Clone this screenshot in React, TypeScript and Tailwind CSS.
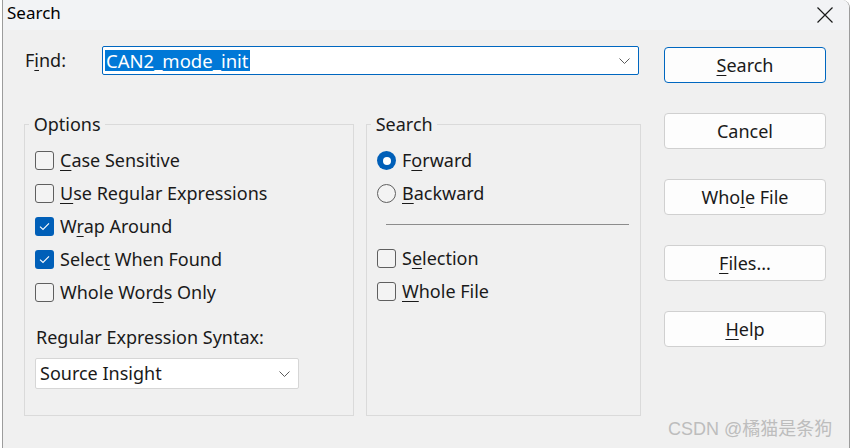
import React from "react";

const font = { fontFamily: '"Noto Sans", "Liberation Sans", sans-serif' };

function U({ children }: { children: React.ReactNode }) {
  return <span className="underline underline-offset-[3px] decoration-1">{children}</span>;
}

function Check({ checked }: { checked?: boolean }) {
  if (checked) {
    return (
      <span className="w-[19px] h-[19px] rounded-[3px] bg-[#005fb8] flex items-center justify-center shrink-0">
        <svg width="11" height="9" viewBox="0 0 11 9" fill="none">
          <path d="M1 4.6 L4 7.4 L10 1.4" stroke="white" strokeWidth="1.1" />
        </svg>
      </span>
    );
  }
  return <span className="w-[19px] h-[19px] rounded-[3px] border border-[#5f5f5f] bg-[#f3f3f3] shrink-0" />;
}

function Radio({ checked }: { checked?: boolean }) {
  if (checked) {
    return (
      <span className="w-[19px] h-[19px] rounded-full bg-[#005fb8] flex items-center justify-center shrink-0">
        <span className="w-[8px] h-[8px] rounded-full bg-white" />
      </span>
    );
  }
  return <span className="w-[19px] h-[19px] rounded-full border border-[#5f5f5f] bg-[#f3f3f3] shrink-0" />;
}

function Row({ box, children }: { box: React.ReactNode; children: React.ReactNode }) {
  return (
    <div className="h-[33px] flex items-center gap-[6px]">
      {box}
      <span>{children}</span>
    </div>
  );
}

function Chevron() {
  return (
    <svg width="11" height="6" viewBox="0 0 11 6" fill="none">
      <path d="M0.5 0.5 L5.5 5.5 L10.5 0.5" stroke="#5a5a5a" strokeWidth="1" />
    </svg>
  );
}

function Btn({ children, primary }: { children: React.ReactNode; primary?: boolean }) {
  return (
    <div
      className={
        "w-[162px] h-[36px] rounded-[4px] bg-[#fdfdfd] flex items-center justify-center " +
        (primary ? "border border-[#0067c0]" : "border border-[#d0d0d0]")
      }
    >
      {children}
    </div>
  );
}

export default function App() {
  return (
    <div className="w-[853px] h-[448px] bg-white flex text-[18px] text-[#1a1a1a] overflow-hidden relative" style={font}>
      <div className="w-[2px] bg-white" />
      <div className="w-[848px] flex flex-col border-l border-r border-[#9c9c9c] rounded-tr-[8px]">
        {/* title bar */}
        <div className="h-[30px] bg-[#f2f3f5] flex items-center justify-between pl-[4px] pr-[16px] pb-[4px] rounded-tr-[8px]">
          <span className="text-[17px] text-black">Search</span>
          <svg width="16" height="16" viewBox="0 0 16 16" fill="none" className="mt-[4px]">
            <path d="M0.5 0.5 L15.5 15.5 M15.5 0.5 L0.5 15.5" stroke="#1a1a1a" strokeWidth="1.2" />
          </svg>
        </div>

        {/* body */}
        <div className="flex-1 bg-[#f0f0f0] flex">
          <div className="w-[660px] flex flex-col">
            {/* find row */}
            <div className="flex items-center mt-[16px] h-[29px]">
              <span className="w-[99px] pl-[22px]">
                F<U>i</U>nd:
              </span>
              <div className="w-[537px] h-[29px] border border-[#0067c0] rounded-[2px] bg-white flex items-center justify-between pl-[2px] pr-[8px]">
                <span className="bg-[#0078d7] text-white leading-[21px] px-[1px] text-[18.5px]">CAN2_mode_init</span>
                <Chevron />
              </div>
            </div>

            {/* group boxes */}
            <div className="flex gap-[12px] ml-[21px] mt-[37px]">
              <fieldset className="w-[330px] h-[304px] border border-[#dadada] pl-[10px]">
                <legend className="ml-[-6px] leading-[24px]">&nbsp;Options&nbsp;</legend>
                <div className="mt-[8px]">
                  <Row box={<Check />}>
                    <U>C</U>ase Sensitive
                  </Row>
                  <Row box={<Check />}>
                    <U>U</U>se Regular Expressions
                  </Row>
                  <Row box={<Check checked />}>
                    W<U>r</U>ap Around
                  </Row>
                  <Row box={<Check checked />}>
                    Selec<U>t</U> When Found
                  </Row>
                  <Row box={<Check />}>
                    Whole Wor<U>d</U>s Only
                  </Row>
                </div>
                <div className="mt-[16px] pl-[1px] leading-[24px]">Regular Expression Syntax:</div>
                <div className="mt-[9px] w-[264px] h-[31px] bg-white border border-[#d6d6d6] rounded-[2px] flex items-center justify-between pl-[4px] pr-[8px]">
                  <span>Source Insight</span>
                  <Chevron />
                </div>
              </fieldset>

              <fieldset className="w-[275px] h-[304px] border border-[#dadada] pl-[10px]">
                <legend className="ml-[-6px] leading-[24px]">&nbsp;Search&nbsp;</legend>
                <div className="mt-[8px]">
                  <Row box={<Radio checked />}>
                    F<U>o</U>rward
                  </Row>
                  <Row box={<Radio />}>
                    <U>B</U>ackward
                  </Row>
                </div>
                <div className="mt-[14px] ml-[9px] mr-[11px] h-px bg-[#8c8c8c]" />
                <div className="mt-[17px]">
                  <Row box={<Check />}>
                    S<U>e</U>lection
                  </Row>
                  <Row box={<Check />}>
                    <U>W</U>hole File
                  </Row>
                </div>
              </fieldset>
            </div>
          </div>

          {/* buttons */}
          <div className="flex flex-col gap-[30px] mt-[17px] ml-[1px]">
            <Btn primary>
              <U>S</U>earch
            </Btn>
            <Btn>Cancel</Btn>
            <Btn>
              Who<U>l</U>e File
            </Btn>
            <Btn>
              <U>F</U>iles...
            </Btn>
            <Btn>
              <U>H</U>elp
            </Btn>
          </div>
        </div>
      </div>
      <div className="flex-1 bg-white" />

      {/* watermark */}
      <div
        className="absolute left-[668px] top-[416px] text-[18px] text-[#bdbdbd]"
        style={{ fontFamily: '"Liberation Sans", "Noto Sans CJK SC", sans-serif' }}
      >
        CSDN @橘猫是条狗
      </div>
    </div>
  );
}
